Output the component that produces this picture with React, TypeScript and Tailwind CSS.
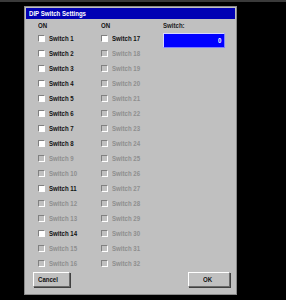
const font = { fontFamily: '"Liberation Sans", Arial, sans-serif' };

const enabled = new Set([1, 2, 3, 4, 5, 6, 7, 8, 11, 14, 17]);

// narrow bold label: the original UI font is a condensed Helvetica
function Txt({ children, className = '' }: { children: React.ReactNode; className?: string }) {
  return (
    <span className={`inline-block whitespace-nowrap text-[8px] font-bold leading-none origin-left scale-x-[0.76] ${className}`}>
      {children}
    </span>
  );
}

function SwitchRow({ n }: { n: number }) {
  const on = enabled.has(n);
  return (
    <div className="flex items-center h-[15px]">
      <div
        className={`w-[7px] h-[7px] border border-t-[#808080] border-l-[#808080] border-b-[#ffffff] border-r-[#ffffff] ${
          on ? 'bg-white' : 'bg-[#c0c0c0]'
        }`}
      />
      <Txt className={`ml-[4px] ${on ? 'text-[#111]' : 'text-[#8e8e8e]'}`}>Switch {n}</Txt>
    </div>
  );
}

function Button({ label, w }: { label: string; w: string }) {
  return (
    <div
      className={`${w} h-[15px] flex items-center justify-center bg-[#c0c0c0] border border-t-white border-l-white border-b-[#6a6a6a] border-r-[#6a6a6a] shadow-[1px_1px_0_#404040]`}
    >
      <Txt className="text-[#111] origin-center">{label}</Txt>
    </div>
  );
}

export default function App() {
  const left = Array.from({ length: 16 }, (_, i) => i + 1);
  const right = Array.from({ length: 16 }, (_, i) => i + 17);
  return (
    <div className="w-[286px] h-[300px] bg-black overflow-hidden" style={font}>
      <div className="h-[2px] bg-[#3a3a3a]" />
      <div className="ml-[24px] mt-[4px] w-[213px] h-[289px] bg-[#c0c0c0] border border-[#8a8a8a] p-[1px] flex flex-col">
        <div className="h-[11px] bg-[#0000b4] flex items-center pl-[3px]">
          <Txt className="text-white">DIP Switch Settings</Txt>
        </div>
        <div className="flex pl-[12px]">
          <div className="w-[63px] flex flex-col">
            <div className="h-[11px] flex items-end">
              <Txt className="text-[#111]">ON</Txt>
            </div>
            <div className="h-[1px]" />
            {left.map((n) => (
              <SwitchRow key={n} n={n} />
            ))}
          </div>
          <div className="w-[62px] flex flex-col">
            <div className="h-[11px] flex items-end">
              <Txt className="text-[#111]">ON</Txt>
            </div>
            <div className="h-[1px]" />
            {right.map((n) => (
              <SwitchRow key={n} n={n} />
            ))}
          </div>
          <div className="flex flex-col">
            <div className="h-[11px] flex items-end">
              <Txt className="text-[#222]">Switch:</Txt>
            </div>
            <div className="mt-[3px] w-[62px] h-[15px] bg-[#0000ff] border border-t-[#d8d8ff] border-l-[#d8d8ff] border-b-[#8080ff] border-r-[#8080ff] flex items-center justify-end pr-[3px]">
              <Txt className="text-white origin-right">0</Txt>
            </div>
          </div>
        </div>
        <div className="flex justify-between pl-[7px] pr-[5px] mt-[1px]">
          <Button label="Cancel" w="w-[37px]" />
          <Button label="OK" w="w-[42px]" />
        </div>
      </div>
    </div>
  );
}
